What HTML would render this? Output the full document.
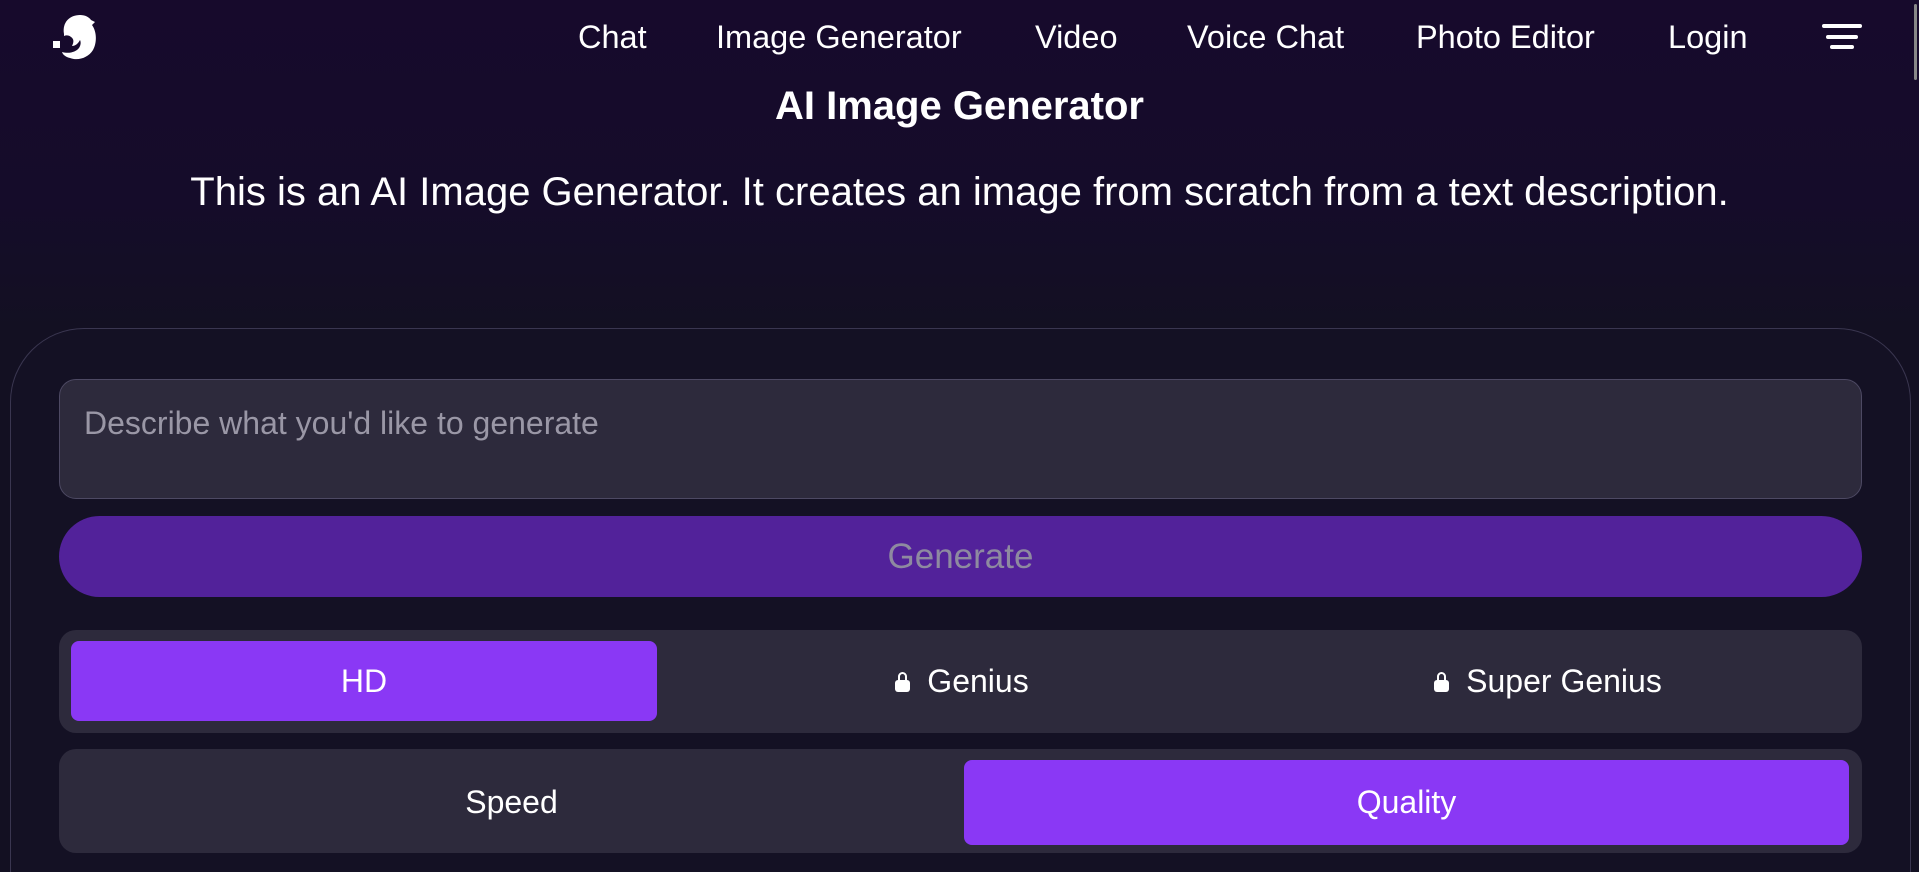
<!DOCTYPE html>
<html><head><meta charset="utf-8"><style>
*{box-sizing:border-box;margin:0;padding:0}
html,body{width:1919px;height:872px;overflow:hidden}
body{font-family:"Liberation Sans",Arial,sans-serif;color:#fff;background:linear-gradient(#170a2c 0px,#150c2a 200px,#131022 330px,#131022 872px);position:relative}
.nav a{position:absolute;top:19px;font-size:32.5px;color:#fff;text-decoration:none;white-space:nowrap}
.h1{position:absolute;top:84px;left:0;width:1919px;text-align:center;font-weight:bold;font-size:40px}
.sub{position:absolute;top:170px;left:0;width:1919px;text-align:center;font-size:40px}
.card{position:absolute;left:10px;top:328px;width:1901px;height:544px;border:1.5px solid #3a3650;border-bottom:none;border-radius:74px 74px 0 0;background:#141124}
.ta{position:absolute;left:59px;top:379px;width:1803px;height:120px;background:#2d2a3c;border:1.5px solid #4d4963;border-radius:17px;color:#9a97a6;font-size:32px;padding:25px 24px}
.gen{position:absolute;left:59px;top:516px;width:1803px;height:81px;background:#52229a;border-radius:41px;color:#8e8aa0;font-size:35px;text-align:center;line-height:81px}
.seg{position:absolute;left:59px;width:1803px;background:#2d2a3c;border-radius:17px}
.opt{position:absolute;font-size:32px;text-align:center;display:flex;align-items:center;justify-content:center;gap:12px}
.lk{gap:17px;padding-left:24px}
.act{background:#8a38f5;border-radius:8px}
.lock{display:inline-block;width:15px;height:20px;position:relative;margin-top:2px}
.lock:before{content:"";position:absolute;left:3px;top:0;width:9px;height:12px;border:2.5px solid #fff;border-radius:6px 6px 0 0;box-sizing:border-box}
.lock:after{content:"";position:absolute;left:0;top:8px;width:15px;height:12px;background:#fff;border-radius:3px}
.sb{position:absolute;right:2px;top:4px;width:3px;height:76px;background:#888;border-radius:2px}
</style></head><body>
<svg style="position:absolute;left:50px;top:12px" width="52" height="50" viewBox="0 0 52 50">
<rect x="3" y="29" width="7" height="7" fill="#fff"/>
<path d="M14 22 C12 10 20 3 30 3 C35 3 39 5 41 8 L45 10 L42 13 C47 20 47 31 43 38 C38 46 28 49 20 46 C16 45 13 43 12 40 C19 42 26 40 29 36 C31 33 31 30 30 28 C28 32 25 34 22 34 C24 30 24 27 21 25 C19 23 16 23 14 24 Z" fill="#fff"/>
</svg>
<div class="nav">
<a style="left:578px">Chat</a><a style="left:716px">Image Generator</a><a style="left:1035px">Video</a><a style="left:1187px">Voice Chat</a><a style="left:1416px">Photo Editor</a><a style="left:1668px">Login</a>
</div>
<div style="position:absolute;left:1822px;top:24px;width:40px;height:4px;background:#fff;border-radius:2px"></div>
<div style="position:absolute;left:1826px;top:35px;width:32px;height:4px;background:#fff;border-radius:2px"></div>
<div style="position:absolute;left:1830px;top:45px;width:24px;height:4px;background:#fff;border-radius:2px"></div>
<div class="sb"></div>
<div class="h1">AI Image Generator</div>
<div class="sub">This is an AI Image Generator. It creates an image from scratch from a text description.</div>
<div class="card"></div>
<div class="ta">Describe what you'd like to generate</div>
<div class="gen">Generate</div>
<div class="seg" style="top:630px;height:103px">
<div class="opt act" style="left:12px;top:11px;width:586px;height:80px">HD</div>
<div class="opt lk" style="left:598px;top:11px;width:586px;height:80px"><span class="lock"></span>Genius</div>
<div class="opt lk" style="left:1184px;top:11px;width:586px;height:80px"><span class="lock"></span>Super Genius</div>
</div>
<div class="seg" style="top:749px;height:104px">
<div class="opt" style="left:10px;top:11px;width:885px;height:85px">Speed</div>
<div class="opt act" style="left:905px;top:11px;width:885px;height:85px">Quality</div>
</div>
</body></html>
